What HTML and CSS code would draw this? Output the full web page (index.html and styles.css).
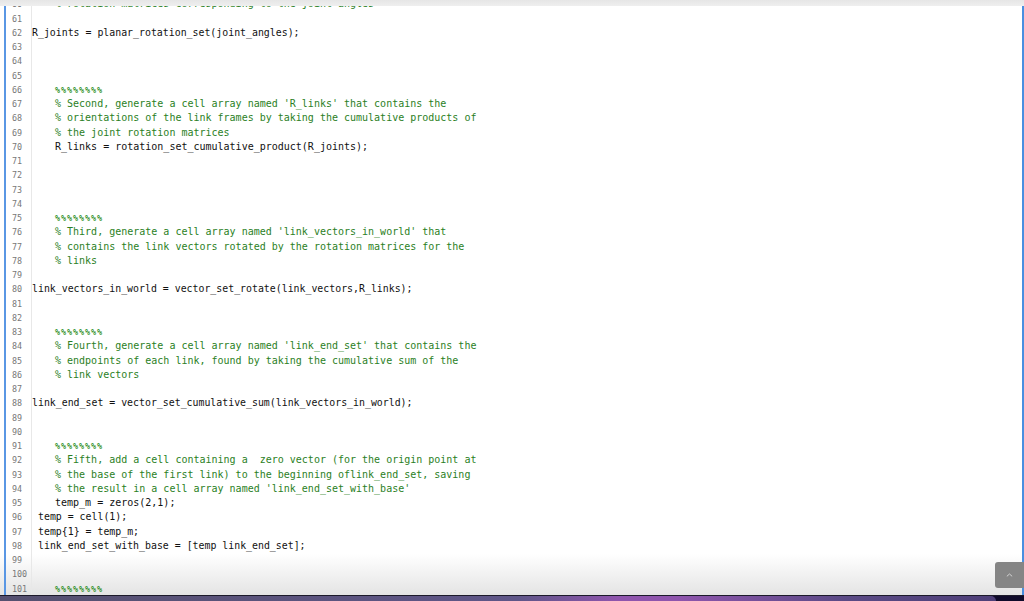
FILE: index.html
```html
<!DOCTYPE html>
<html lang="en">
<head>
<meta charset="utf-8">
<title>Code listing</title>
<link rel="stylesheet" href="styles.css">
</head>
<body>
<div class="page">
  <div class="top-band"></div>
  <div class="editor">
    <div class="clip"><div class="line"><span class="num">60</span><span class="code c i4">% rotation matrices corresponding to the joint angles</span></div></div>
    <div class="line"><span class="num">61</span></div>
    <div class="line"><span class="num">62</span><span class="code">R_joints = planar_rotation_set(joint_angles);</span></div>
    <div class="line"><span class="num">63</span></div>
    <div class="line"><span class="num">64</span></div>
    <div class="line"><span class="num">65</span></div>
    <div class="line"><span class="num">66</span><span class="code c i4 wavy">%%%%%%%%</span></div>
    <div class="line"><span class="num">67</span><span class="code c i4">% Second, generate a cell array named 'R_links' that contains the</span></div>
    <div class="line"><span class="num">68</span><span class="code c i4">% orientations of the link frames by taking the cumulative products of</span></div>
    <div class="line"><span class="num">69</span><span class="code c i4">% the joint rotation matrices</span></div>
    <div class="line"><span class="num">70</span><span class="code i4">R_links = rotation_set_cumulative_product(R_joints);</span></div>
    <div class="line"><span class="num">71</span></div>
    <div class="line"><span class="num">72</span></div>
    <div class="line"><span class="num">73</span></div>
    <div class="line"><span class="num">74</span></div>
    <div class="line"><span class="num">75</span><span class="code c i4 wavy">%%%%%%%%</span></div>
    <div class="line"><span class="num">76</span><span class="code c i4">% Third, generate a cell array named 'link_vectors_in_world' that</span></div>
    <div class="line"><span class="num">77</span><span class="code c i4">% contains the link vectors rotated by the rotation matrices for the</span></div>
    <div class="line"><span class="num">78</span><span class="code c i4">% links</span></div>
    <div class="line"><span class="num">79</span></div>
    <div class="line"><span class="num">80</span><span class="code">link_vectors_in_world = vector_set_rotate(link_vectors,R_links);</span></div>
    <div class="line"><span class="num">81</span></div>
    <div class="line"><span class="num">82</span></div>
    <div class="line"><span class="num">83</span><span class="code c i4 wavy">%%%%%%%%</span></div>
    <div class="line"><span class="num">84</span><span class="code c i4">% Fourth, generate a cell array named 'link_end_set' that contains the</span></div>
    <div class="line"><span class="num">85</span><span class="code c i4">% endpoints of each link, found by taking the cumulative sum of the</span></div>
    <div class="line"><span class="num">86</span><span class="code c i4">% link vectors</span></div>
    <div class="line"><span class="num">87</span></div>
    <div class="line"><span class="num">88</span><span class="code">link_end_set = vector_set_cumulative_sum(link_vectors_in_world);</span></div>
    <div class="line"><span class="num">89</span></div>
    <div class="line"><span class="num">90</span></div>
    <div class="line"><span class="num">91</span><span class="code c i4 wavy">%%%%%%%%</span></div>
    <div class="line"><span class="num">92</span><span class="code c i4">% Fifth, add a cell containing a  zero vector (for the origin point at</span></div>
    <div class="line"><span class="num">93</span><span class="code c i4">% the base of the first link) to the beginning oflink_end_set, saving</span></div>
    <div class="line"><span class="num">94</span><span class="code c i4">% the result in a cell array named 'link_end_set_with_base'</span></div>
    <div class="line"><span class="num">95</span><span class="code i4">temp_m = zeros(2,1);</span></div>
    <div class="line"><span class="num">96</span><span class="code i1">temp = cell(1);</span></div>
    <div class="line"><span class="num">97</span><span class="code i1">temp{1} = temp_m;</span></div>
    <div class="line"><span class="num">98</span><span class="code i1">link_end_set_with_base = [temp link_end_set];</span></div>
    <div class="line"><span class="num">99</span></div>
    <div class="line"><span class="num">100</span></div>
    <div class="line"><span class="num">101</span><span class="code c i4 wavy">%%%%%%%%</span></div>
  </div>
  <div class="fade"></div>
  <button class="to-top" type="button" aria-label="Back to top">
    <svg viewBox="0 0 10 6" width="7" height="4"><path d="M1 5 5 1.5 9 5" fill="none" stroke="#e6e6e6" stroke-width="1.2"/></svg>
  </button>
  <div class="taskbar"><div class="taskbar-tab"></div></div>
</div>
</body>
</html>
```
FILE: styles.css
```css
html, body {
  margin: 0;
  padding: 0;
  background: #fff;
}
.page {
  position: relative;
  width: 1024px;
  height: 601px;
  overflow: hidden;
  display: flex;
  flex-direction: column;
  background: #fff;
}
.top-band {
  position: absolute;
  top: 0;
  left: 0;
  right: 0;
  height: 6px;
  background: linear-gradient(#e6e6e6, #efefef);
  z-index: 2;
}
.editor {
  position: relative;
  z-index: 1;
  flex: 1;
  min-height: 0;
  overflow: hidden;
  border-left: 2px solid #5a97e4;
  border-right: 2px solid #4a8fe0;
  margin-left: 4px;
  font-family: "DejaVu Sans Mono", monospace;
  font-size: 10px;
  color: #111;
}
.clip {
  height: 11.6px;
  display: flex;
  align-items: flex-end;
  overflow: hidden;
}
.line {
  display: flex;
  height: 14.26px;
  line-height: 14.26px;
  white-space: pre;
}
.clip .line { flex: none; width: 100%; }
.num {
  flex: none;
  width: 19px;
  padding-left: 6px;
  font-size: 8.4px;
  color: #777;
  border-right: 1px solid #e8e8e8;
}
.code { font-size: 9.9px; }
.c { color: #2b7f25; }
.i1 { margin-left: 6px; }
.i4 { margin-left: 23px; font-size: 10px; }
.wavy {
  font-size: 8.4px;
  font-weight: 700;
  letter-spacing: 0.94px;
  color: #2f8f28;
}
.fade {
  position: absolute;
  left: 0;
  right: 0;
  bottom: 5px;
  height: 42px;
  background: linear-gradient(rgba(232,232,232,0), rgba(224,224,224,.9));
  pointer-events: none;
}
.to-top {
  position: absolute;
  z-index: 2;
  right: 0;
  bottom: 13px;
  width: 29px;
  height: 26px;
  padding: 0;
  border: 0;
  border-radius: 3px 0 0 3px;
  background: #858585;
  display: flex;
  align-items: center;
  justify-content: center;
}
.taskbar {
  position: relative;
  z-index: 2;
  flex: none;
  height: 5px;
  background: #0f0a2a;
  border-top: 1px solid #1c1a2a;
}
.taskbar-tab {
  height: 100%;
  width: 996px;
  border-radius: 0 5px 0 0;
  background: linear-gradient(90deg, #55506f 0%, #5f5688 52%, #8f55ad 62%, #8f55ad 68%, #5a4a85 85%, #4e3f78 100%);
}
```
